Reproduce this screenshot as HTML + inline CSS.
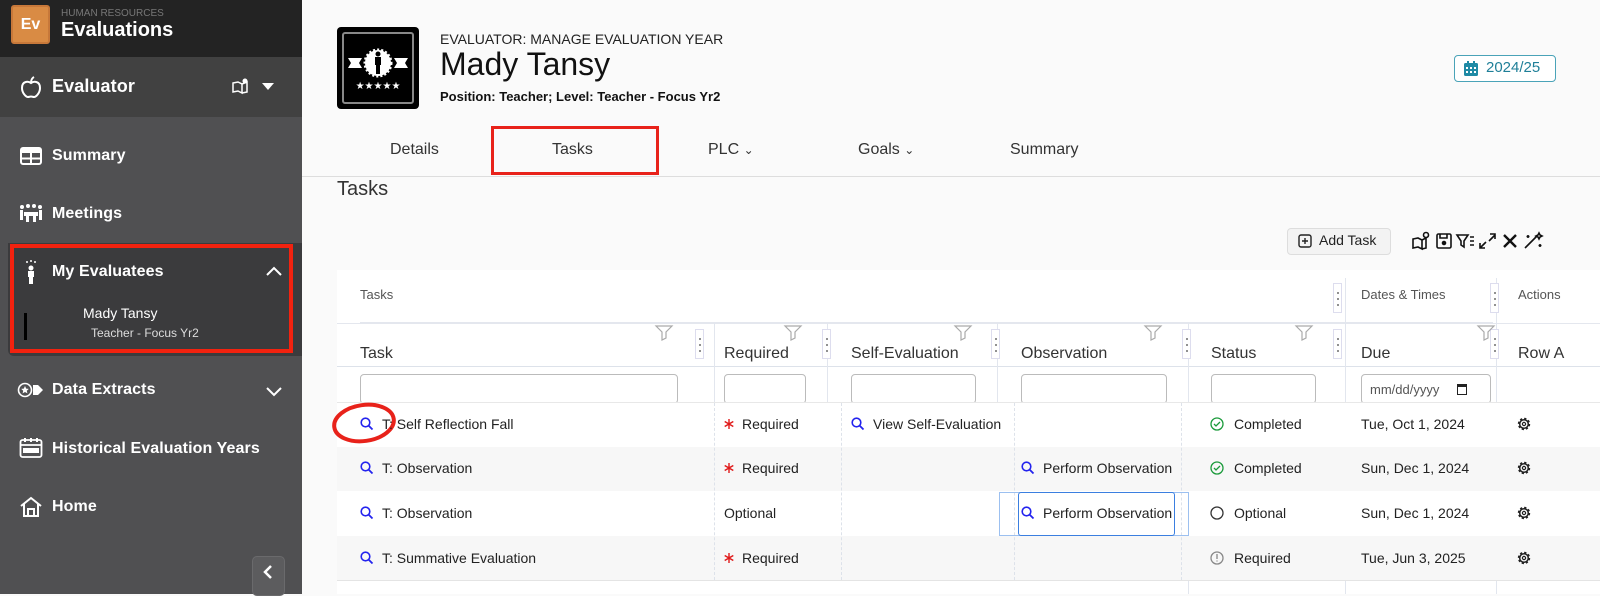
<!DOCTYPE html>
<html><head><meta charset="utf-8"><style>
*{box-sizing:border-box;margin:0;padding:0}
body{width:1600px;height:594px;overflow:hidden;font-family:"Liberation Sans",sans-serif;background:#fafafa;position:relative;color:#222}
.a{position:absolute}
.sb{left:0;top:0;width:302px;height:594px;background:#505052}
.nav{color:#fff;font-size:16px;font-weight:bold;left:52px;letter-spacing:0.1px}
.t{font-size:14px;color:#222;white-space:nowrap}
.h{font-size:16px;color:#333}
.grip{width:9px;height:30px;border:1px solid #dde;background:#fff}
.grip:after{content:"";position:absolute;left:3px;top:6px;width:2px;height:16px;background:radial-gradient(circle,#888 1px,transparent 1.2px) 0 0/2px 6px}
.inp{height:30px;border:1px solid #bbb;border-radius:4px;background:#fff}
.row{left:337px;width:1263px;height:45px}
.vl{width:1px;background:#e2e6ee}
</style></head><body>

<!-- sidebar -->
<div class="a sb"></div>
<div class="a" style="left:0;top:0;width:302px;height:57px;background:#232323"></div>
<div class="a" style="left:11px;top:5px;width:39px;height:39px;background:#d98b44;border:2px solid #c7783a;border-radius:3px;color:#fff;font-weight:bold;font-size:16px;text-align:center;line-height:35px">Ev</div>
<div class="a" style="left:61px;top:8px;color:#777;font-size:10px">HUMAN RESOURCES</div>
<div class="a" style="left:61px;top:19px;color:#fff;font-size:20px;font-weight:bold">Evaluations</div>
<div class="a" style="left:0;top:57px;width:302px;height:60px;background:#414141"></div>
<svg class="a" style="left:20px;top:75px" width="22" height="24" viewBox="0 0 22 24"><path d="M11 8c-3-2-9-2-9 5 0 5 4 9 6 9 1 0 2-.5 3-.5s2 .5 3 .5c2 0 6-4 6-9 0-7-6-7-9-5zM11 8c0-3 1-5 3-6" fill="none" stroke="#fff" stroke-width="2"/></svg>
<div class="a nav" style="top:76px;font-size:18px">Evaluator</div>
<svg class="a" style="left:231px;top:77px" width="18" height="18" viewBox="0 0 18 18"><path d="M2 6l5-1 4 2 0 9-4-2-5 1z M11 7l5-2 0 10-5 1" fill="none" stroke="#fff" stroke-width="1.5"/><circle cx="14" cy="4" r="2.5" fill="#fff"/></svg>
<div class="a" style="left:262px;top:83px;border-left:6px solid transparent;border-right:6px solid transparent;border-top:7px solid #fff"></div>

<svg class="a" style="left:20px;top:147px" width="22" height="18" viewBox="0 0 22 18"><rect x="1" y="1" width="20" height="16" rx="2" fill="none" stroke="#fff" stroke-width="2"/><rect x="1" y="1" width="20" height="5" fill="#fff"/><path d="M11 6v11M1 11.5h20" stroke="#fff" stroke-width="2"/></svg>
<div class="a nav" style="top:147px">Summary</div>
<svg class="a" style="left:19px;top:204px" width="24" height="20" viewBox="0 0 24 20"><g fill="#fff"><circle cx="3" cy="3" r="2"/><circle cx="9" cy="2" r="2"/><circle cx="15" cy="2" r="2"/><circle cx="21" cy="3" r="2"/><rect x="1" y="6" width="3" height="10"/><rect x="20" y="6" width="3" height="10"/><rect x="5" y="8" width="14" height="4"/><rect x="7" y="12" width="3" height="6"/><rect x="14" y="12" width="3" height="6"/></g></svg>
<div class="a nav" style="top:205px">Meetings</div>

<div class="a" style="left:8px;top:243px;width:294px;height:113px;background:#3b3b3d;border-radius:0 0 0 6px"></div>
<div class="a" style="left:10px;top:244px;width:283px;height:109px;border:4px solid #f2220f"></div>
<svg class="a" style="left:24px;top:260px" width="14" height="24" viewBox="0 0 14 24"><g fill="#fff"><circle cx="7" cy="8" r="2.5"/><path d="M4 11h6v6h-1v7h-4v-7h-1z"/><circle cx="3" cy="2" r="1"/><circle cx="7" cy="1" r="1"/><circle cx="11" cy="2" r="1"/></g></svg>
<div class="a nav" style="top:263px">My Evaluatees</div>
<svg class="a" style="left:266px;top:266px" width="16" height="10" viewBox="0 0 16 10"><path d="M1 9l7-7 7 7" fill="none" stroke="#fff" stroke-width="2"/></svg>
<div class="a" style="left:24px;top:313px;width:3px;height:27px;background:#000"></div>
<div class="a" style="left:83px;top:305px;color:#fff;font-size:14px">Mady Tansy</div>
<div class="a" style="left:91px;top:326px;color:#ddd;font-size:12px">Teacher - Focus Yr2</div>

<svg class="a" style="left:17px;top:381px" width="28" height="18" viewBox="0 0 28 18"><circle cx="8" cy="9" r="6.5" fill="none" stroke="#fff" stroke-width="1.6"/><path d="M8 5l1.2 2.6 2.6.3-2 1.8.6 2.7L8 11l-2.4 1.4.6-2.7-2-1.8 2.6-.3z" fill="#fff"/><path d="M16 4h5l5 5-5 5h-5z" fill="#fff"/></svg>
<div class="a nav" style="top:381px">Data Extracts</div>
<svg class="a" style="left:266px;top:387px" width="16" height="10" viewBox="0 0 16 10"><path d="M1 1l7 7 7-7" fill="none" stroke="#fff" stroke-width="2"/></svg>
<svg class="a" style="left:19px;top:437px" width="24" height="22" viewBox="0 0 24 22"><rect x="1.5" y="3" width="21" height="17" rx="2" fill="none" stroke="#fff" stroke-width="1.8"/><path d="M1.5 8h21" stroke="#fff" stroke-width="1.8"/><g fill="#fff"><rect x="5" y="1" width="2" height="4"/><rect x="11" y="1" width="2" height="4"/><rect x="17" y="1" width="2" height="4"/><rect x="4" y="11" width="16" height="5"/></g></svg>
<div class="a nav" style="top:440px">Historical Evaluation Years</div>
<svg class="a" style="left:19px;top:495px" width="24" height="24" viewBox="0 0 24 24"><path d="M2 11L12 3l10 8M5 9v12h14V9M9 21v-7h6v7" fill="none" stroke="#fff" stroke-width="2"/></svg>
<div class="a nav" style="top:498px">Home</div>
<div class="a" style="left:252px;top:556px;width:33px;height:40px;background:#5c5c5e;border:1px solid #6a6a6c;border-radius:5px"></div>
<svg class="a" style="left:262px;top:564px" width="12" height="16" viewBox="0 0 12 16"><path d="M9 2L3 8l6 6" fill="none" stroke="#fff" stroke-width="2.5"/></svg>

<!-- header -->
<div class="a" style="left:337px;top:27px;width:82px;height:82px;background:#000;border-radius:4px"></div>
<div class="a" style="left:342px;top:32px;width:72px;height:72px;border:2px solid #888;border-radius:3px"></div>
<svg class="a" style="left:346px;top:46px" width="64" height="46" viewBox="0 0 64 46"><path d="M2 12h14l-3 5 3 5H2l3-5z M62 12H48l3 5-3 5h14l-3-5z" fill="#fff"/><circle cx="32" cy="17" r="13" fill="#fff" stroke="#fff" stroke-width="3" stroke-dasharray="2 2"/><path d="M29 11h6v8h-1v9h-4v-9h-1z" fill="#000"/><circle cx="32" cy="8" r="2.5" fill="#000"/><text x="32" y="43" fill="#fff" font-size="10" text-anchor="middle" font-family="DejaVu Sans">★★★★★</text></svg>
<div class="a" style="left:440px;top:31px;font-size:14px;color:#222">EVALUATOR: MANAGE EVALUATION YEAR</div>
<div class="a" style="left:440px;top:46px;font-size:32px;color:#111">Mady Tansy</div>
<div class="a" style="left:440px;top:89px;font-size:13px;font-weight:bold;color:#111">Position: Teacher; Level: Teacher - Focus Yr2</div>
<div class="a" style="left:1454px;top:55px;width:102px;height:27px;border:1px solid #4aa3b8;border-radius:4px;background:#fff"></div>
<svg class="a" style="left:1463px;top:60px" width="16" height="17" viewBox="0 0 16 17"><rect x="1" y="3" width="14" height="13" rx="1.5" fill="#1f8aa5"/><g fill="#fff"><rect x="3" y="7" width="2" height="2"/><rect x="7" y="7" width="2" height="2"/><rect x="11" y="7" width="2" height="2"/><rect x="3" y="11" width="2" height="2"/><rect x="7" y="11" width="2" height="2"/><rect x="11" y="11" width="2" height="2"/></g><rect x="4" y="1" width="2" height="4" fill="#1f8aa5"/><rect x="10" y="1" width="2" height="4" fill="#1f8aa5"/></svg>
<div class="a" style="left:1486px;top:59px;font-size:15px;color:#1f7f98">2024/25</div>

<div class="a h" style="left:390px;top:141px">Details</div>
<div class="a" style="left:491px;top:126px;width:168px;height:49px;border:3px solid #e8221a"></div>
<div class="a h" style="left:552px;top:141px">Tasks</div>
<div class="a h" style="left:708px;top:141px">PLC <span style="font-size:12px">&#8964;</span></div>
<div class="a h" style="left:858px;top:141px">Goals <span style="font-size:12px">&#8964;</span></div>
<div class="a h" style="left:1010px;top:141px">Summary</div>
<div class="a" style="left:302px;top:176px;width:1298px;height:1px;background:#ddd"></div>
<div class="a" style="left:337px;top:178px;font-size:20px;color:#333">Tasks</div>

<div class="a" style="left:1287px;top:228px;width:104px;height:27px;border:1px solid #ddd;border-radius:4px;background:#f3f3f3"></div>
<svg class="a" style="left:1298px;top:234px" width="14" height="14" viewBox="0 0 14 14"><rect x="1" y="1" width="12" height="12" rx="2" fill="none" stroke="#222" stroke-width="1.4"/><path d="M7 4v6M4 7h6" stroke="#222" stroke-width="1.4"/></svg>
<div class="a" style="left:1319px;top:232px;font-size:14px;color:#222">Add Task</div>
<svg class="a" style="left:1410px;top:231px" width="150" height="20" viewBox="0 0 150 20"><g fill="none" stroke="#111" stroke-width="1.6"><path d="M3 8l5-1 4 2v9l-4-2-5 1zM12 9l4-2v10l-4 1"/><circle cx="16" cy="4" r="2.5"/><rect x="27" y="3" width="14" height="14" rx="1.5"/><path d="M30 3v4h7V3"/><circle cx="34" cy="12" r="1.5" fill="#111"/><path d="M47 4h11l-4 6v6l-3-2v-4z M60 6h4M60 10h4M60 14h4"/><path d="M70 17l6-6M70 12v5h5M79 10l6-6M80 3h5v5"/><path d="M94 4l12 12M106 4l-12 12" stroke-width="2.4"/><path d="M115 17l12-12M129 2l1 2 2 1-2 1-1 2-1-2-2-1 2-1zM118 4v3M116.5 5.5h3M130 13v3M128.5 14.5h3"/></g></svg>

<!-- table -->
<div class="a" style="left:337px;top:270px;width:1263px;height:324px;background:#fff"></div>
<div class="a" style="left:360px;top:287px;font-size:13px;color:#555">Tasks</div>
<div class="a" style="left:1361px;top:287px;font-size:13px;color:#555">Dates &amp; Times</div>
<div class="a" style="left:1518px;top:287px;font-size:13px;color:#555">Actions</div>
<div class="a" style="left:360px;top:322px;width:1133px;height:1px;background:#e4e7ee"></div>
<div class="a" style="left:337px;top:323px;width:1263px;height:1px;background:#e4e7ee"></div>
<div class="a" style="left:337px;top:366px;width:1263px;height:1px;background:#dde2ea"></div>
<div class="a vl" style="left:1345px;top:278px;height:316px"></div>
<div class="a vl" style="left:1496px;top:278px;height:316px"></div>
<div class="a vl" style="left:1188px;top:323px;height:271px"></div>
<div class="a vl" style="left:714px;top:323px;height:80px"></div>
<div class="a vl" style="left:827px;top:323px;height:80px"></div>
<div class="a vl" style="left:997px;top:323px;height:80px"></div>
<div class="a grip" style="left:1333px;top:283px"></div>
<div class="a grip" style="left:1490px;top:283px"></div>
<div class="a grip" style="left:695px;top:329px"></div>
<div class="a grip" style="left:822px;top:329px"></div>
<div class="a grip" style="left:991px;top:329px"></div>
<div class="a grip" style="left:1182px;top:329px"></div>
<div class="a grip" style="left:1333px;top:329px"></div>
<div class="a grip" style="left:1490px;top:329px"></div>
<svg class="a" style="left:0;top:0" width="1600" height="594"><g fill="none" stroke="#aaa" stroke-width="1.2"><path d="M656 326h16l-6 6v6l-4 2v-8z"/><path d="M785 326h16l-6 6v6l-4 2v-8z"/><path d="M955 326h16l-6 6v6l-4 2v-8z"/><path d="M1145 326h16l-6 6v6l-4 2v-8z"/><path d="M1296 326h16l-6 6v6l-4 2v-8z"/><path d="M1478 326h16l-6 6v6l-4 2v-8z"/></g></svg>
<div class="a" style="left:360px;top:345px;font-size:16px;color:#333">Task</div>
<div class="a" style="left:724px;top:345px;font-size:16px;color:#333">Required</div>
<div class="a" style="left:851px;top:345px;font-size:16px;color:#333">Self-Evaluation</div>
<div class="a" style="left:1021px;top:345px;font-size:16px;color:#333">Observation</div>
<div class="a" style="left:1211px;top:345px;font-size:16px;color:#333">Status</div>
<div class="a" style="left:1361px;top:345px;font-size:16px;color:#333">Due</div>
<div class="a" style="left:1518px;top:345px;font-size:16px;color:#333">Row A</div>
<div class="a inp" style="left:360px;top:374px;width:318px"></div>
<div class="a inp" style="left:724px;top:374px;width:82px"></div>
<div class="a inp" style="left:851px;top:374px;width:125px"></div>
<div class="a inp" style="left:1021px;top:374px;width:146px"></div>
<div class="a inp" style="left:1211px;top:374px;width:105px"></div>
<div class="a inp" style="left:1361px;top:374px;width:130px;font-size:13px;color:#555;padding:7px 0 0 8px">mm/dd/yyyy <span style="display:inline-block;width:10px;height:11px;border:1.5px solid #222;border-top-width:3px;margin-left:14px;vertical-align:-1px"></span></div>
<div class="a" style="left:337px;top:402px;width:1263px;height:1px;background:#e8e8e8"></div>

<div class="a row" style="top:403px;background:#fff"></div>
<div class="a row" style="top:447px;background:#f7f7f7"></div>
<div class="a row" style="top:491px;background:#fff"></div>
<div class="a row" style="top:536px;background:#f7f7f7"></div>
<div class="a" style="left:337px;top:580px;width:1263px;height:1px;background:#e4e4e4"></div>
<div class="a" style="left:714px;top:403px;height:177px;border-left:1px dashed #dde2ea"></div>
<div class="a" style="left:841px;top:403px;height:177px;border-left:1px dashed #dde2ea"></div>
<div class="a" style="left:1014px;top:403px;height:177px;border-left:1px dashed #dde2ea"></div>
<div class="a" style="left:1181px;top:403px;height:177px;border-left:1px dashed #dde2ea"></div>
<div class="a" style="left:999px;top:492px;width:190px;height:44px;border:1px solid #9cc0f0"></div>
<div class="a" style="left:1018px;top:492px;width:157px;height:44px;border:1.5px solid #3b7fe0;border-radius:3px"></div>

<svg class="a" style="left:0;top:0" width="1600" height="594"><defs><g id="m"><circle cx="5.5" cy="5.5" r="4.3" fill="none" stroke="#2323ee" stroke-width="1.6"/><path d="M8.5 8.5l4 4" stroke="#2323ee" stroke-width="1.8"/></g><g id="s"><path d="M5 0v10M0.7 2.5l8.6 5M0.7 7.5l8.6-5" stroke="#e01919" stroke-width="1.4"/></g><g id="g"><circle cx="6" cy="6" r="4.3" fill="none" stroke="#222" stroke-width="1.5"/><circle cx="6" cy="6" r="5.3" fill="none" stroke="#222" stroke-width="1.8" stroke-dasharray="2.2 1.96"/><circle cx="6" cy="6" r="1.6" fill="none" stroke="#222" stroke-width="1.2"/></g></defs>
<use href="#m" x="360" y="417"/><use href="#m" x="360" y="461"/><use href="#m" x="360" y="506"/><use href="#m" x="360" y="551"/>
<use href="#m" x="851" y="417"/><use href="#m" x="1021" y="461"/><use href="#m" x="1021" y="506"/>
<use href="#s" x="724" y="419"/><use href="#s" x="724" y="463"/><use href="#s" x="724" y="553"/>
<g fill="none" stroke-width="1.3"><circle cx="1217" cy="424" r="6" stroke="#1a9a3a"/><path d="M1214 424l2 2 4-4" stroke="#1a9a3a"/><circle cx="1217" cy="468" r="6" stroke="#1a9a3a"/><path d="M1214 468l2 2 4-4" stroke="#1a9a3a"/><circle cx="1217" cy="513" r="6" stroke="#333"/><circle cx="1217" cy="558" r="6" stroke="#888"/><path d="M1217 554v5M1217 560.5v1" stroke="#888"/></g>
<use href="#g" x="1518" y="418"/><use href="#g" x="1518" y="462"/><use href="#g" x="1518" y="507"/><use href="#g" x="1518" y="552"/>
<ellipse cx="364" cy="423" rx="30" ry="18" fill="none" stroke="#e8221a" stroke-width="4" transform="rotate(-8 364 423)"/>
</svg>
<div class="a t" style="left:382px;top:416px">T: Self Reflection Fall</div>
<div class="a t" style="left:382px;top:460px">T: Observation</div>
<div class="a t" style="left:382px;top:505px">T: Observation</div>
<div class="a t" style="left:382px;top:550px">T: Summative Evaluation</div>
<div class="a t" style="left:742px;top:416px">Required</div>
<div class="a t" style="left:742px;top:460px">Required</div>
<div class="a t" style="left:724px;top:505px">Optional</div>
<div class="a t" style="left:742px;top:550px">Required</div>
<div class="a t" style="left:873px;top:416px">View Self-Evaluation</div>
<div class="a t" style="left:1043px;top:460px">Perform Observation</div>
<div class="a t" style="left:1043px;top:505px">Perform Observation</div>
<div class="a t" style="left:1234px;top:416px">Completed</div>
<div class="a t" style="left:1234px;top:460px">Completed</div>
<div class="a t" style="left:1234px;top:505px">Optional</div>
<div class="a t" style="left:1234px;top:550px">Required</div>
<div class="a t" style="left:1361px;top:416px">Tue, Oct 1, 2024</div>
<div class="a t" style="left:1361px;top:460px">Sun, Dec 1, 2024</div>
<div class="a t" style="left:1361px;top:505px">Sun, Dec 1, 2024</div>
<div class="a t" style="left:1361px;top:550px">Tue, Jun 3, 2025</div>
</body></html>
